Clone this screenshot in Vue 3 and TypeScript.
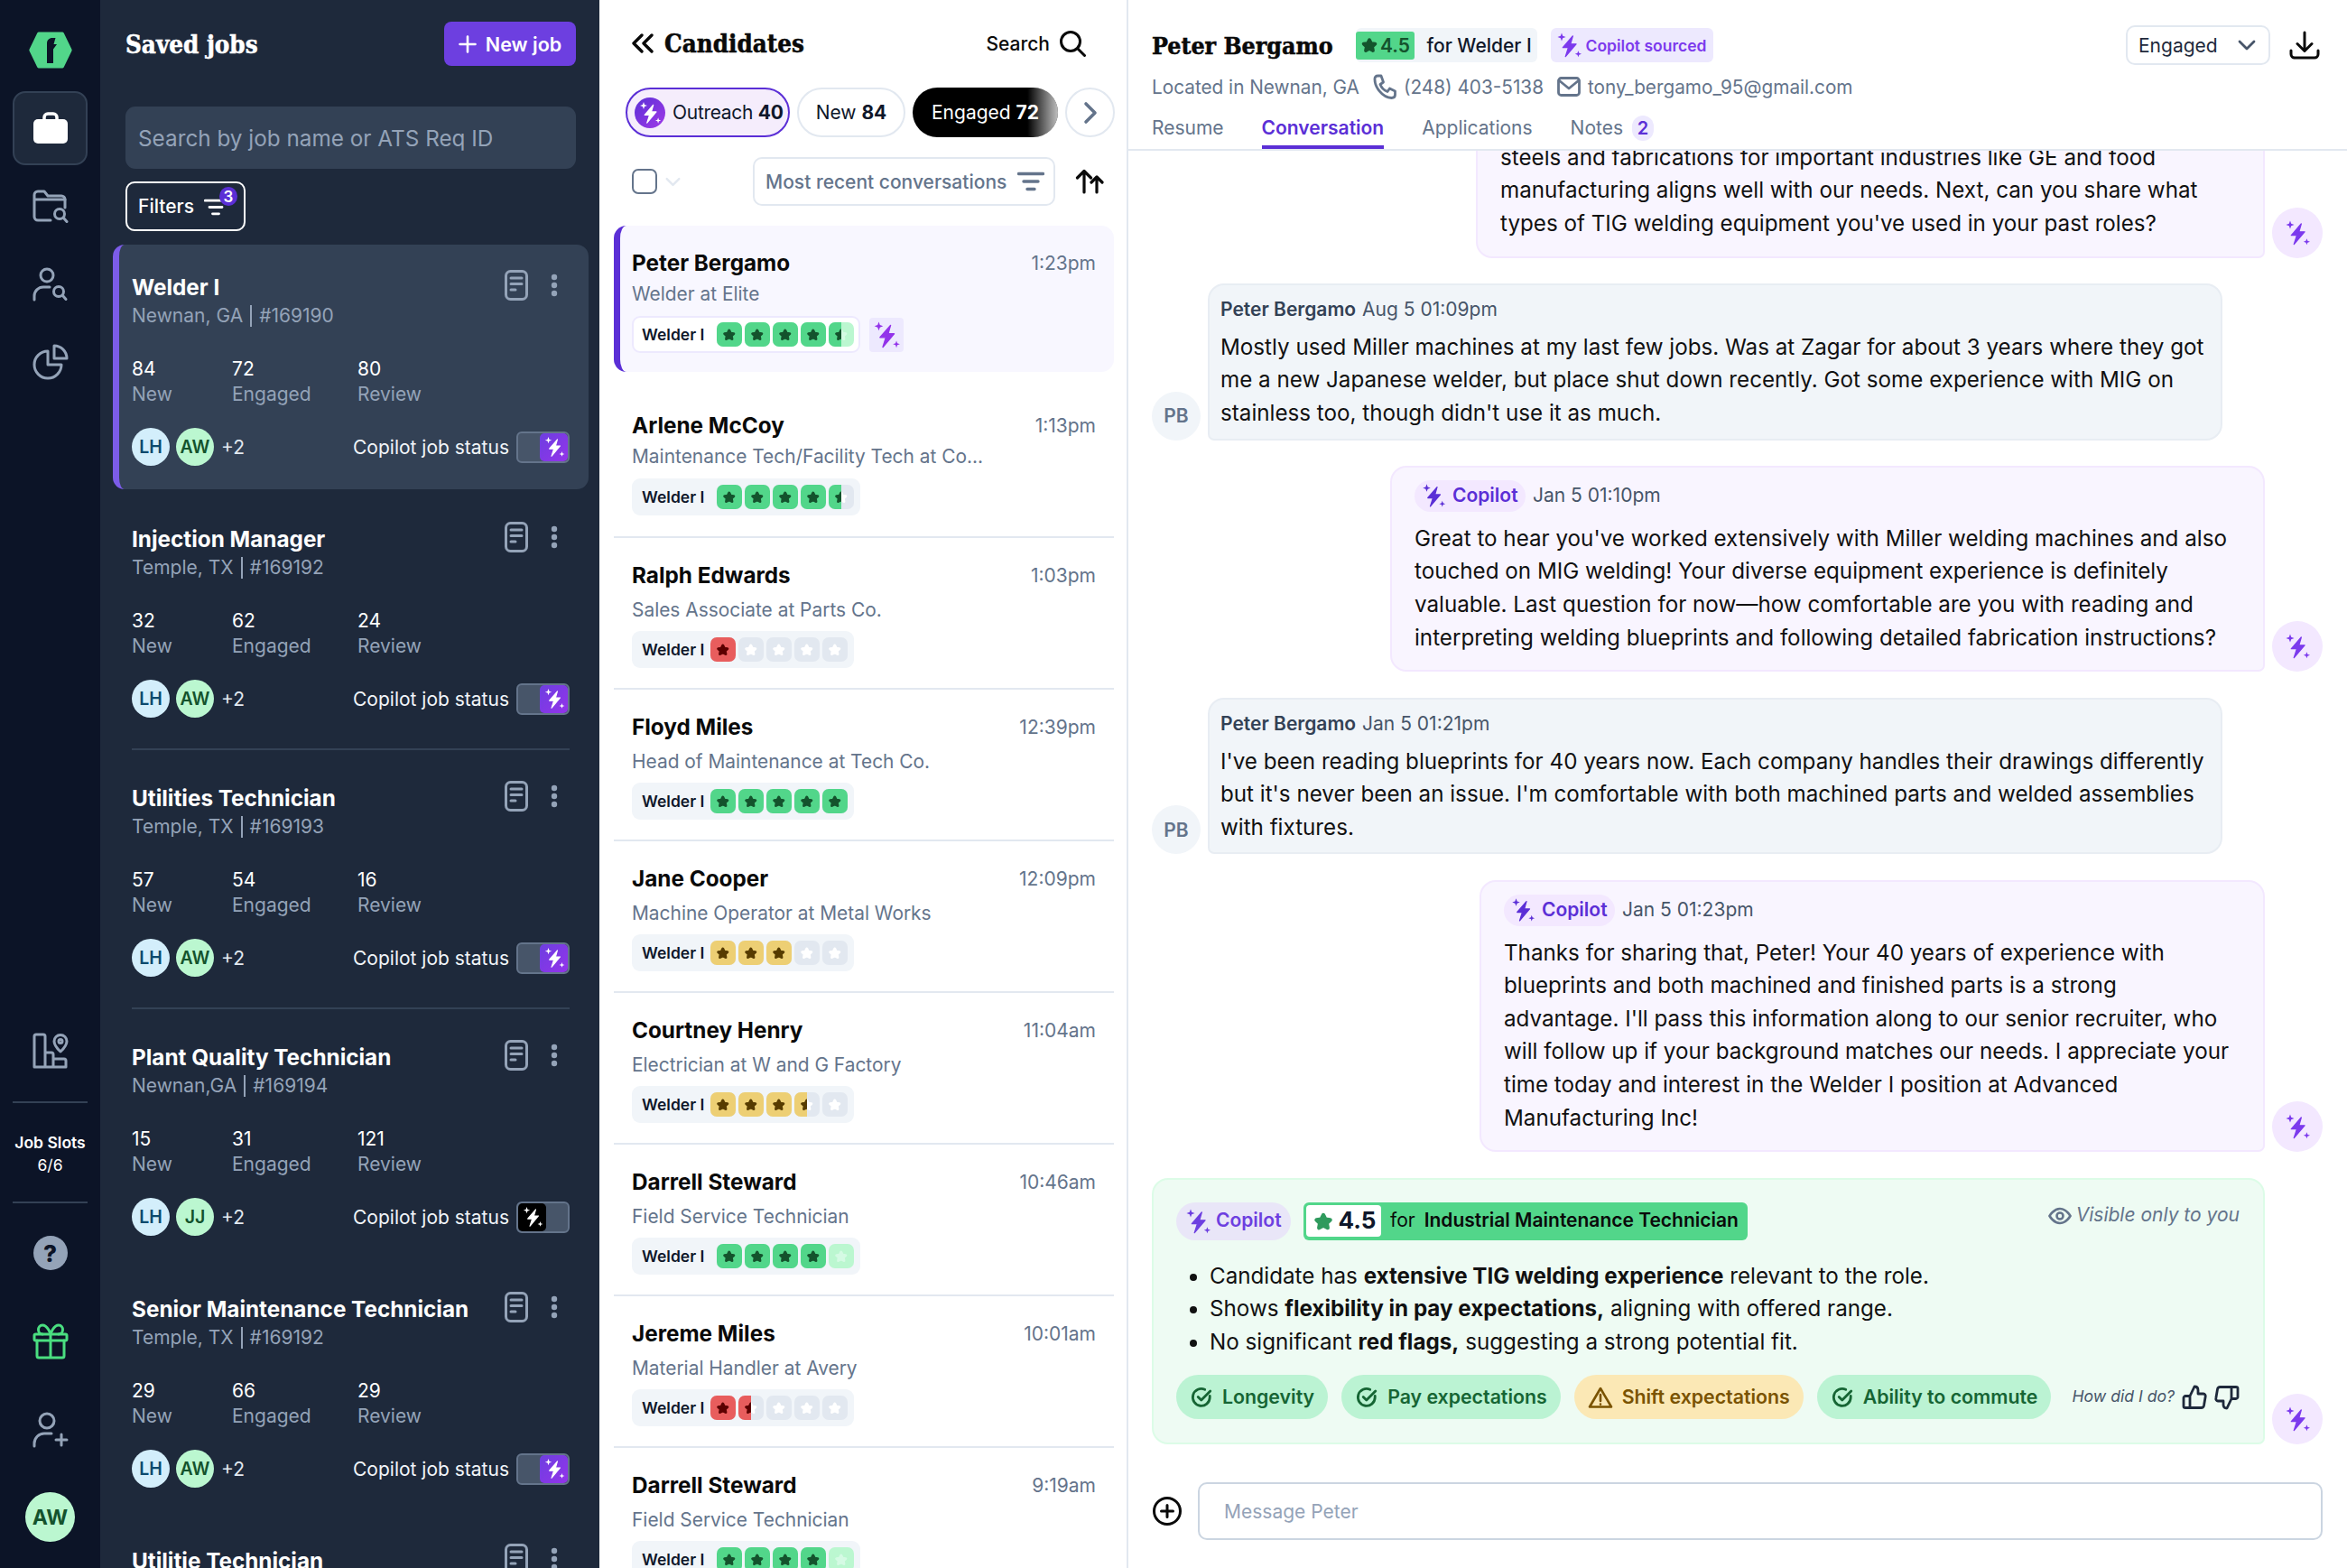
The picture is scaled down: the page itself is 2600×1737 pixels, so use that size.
<script setup lang="ts">
type Job = { title: string; loc: string; id: string; n: number; e: number; r: number; second: string; on: boolean; selected?: boolean; rule?: boolean; tail?: boolean }
const jobs: Job[] = [
  { title: 'Welder I', loc: 'Newnan, GA', id: '#169190', n: 84, e: 72, r: 80, second: 'AW', on: true, selected: true },
  { title: 'Injection Manager', loc: 'Temple, TX', id: '#169192', n: 32, e: 62, r: 24, second: 'AW', on: true, rule: true },
  { title: 'Utilities Technician', loc: 'Temple, TX', id: '#169193', n: 57, e: 54, r: 16, second: 'AW', on: true, rule: true },
  { title: 'Plant Quality Technician', loc: 'Newnan,GA', id: '#169194', n: 15, e: 31, r: 121, second: 'JJ', on: false },
  { title: 'Senior Maintenance Technician', loc: 'Temple, TX', id: '#169192', n: 29, e: 66, r: 29, second: 'AW', on: true },
  { title: 'Utilitie Technician', loc: 'Temple, TX', id: '#169193', n: 57, e: 54, r: 16, second: 'AW', on: true, tail: true },
]
type Cand = { name: string; sub: string; time: string; rating: number; tone: 'green' | 'yellow' | 'red'; pale?: boolean; wide?: boolean; selected?: boolean; tight?: boolean }
const cands: Cand[] = [
  { name: 'Peter Bergamo', sub: 'Welder at Elite', time: '1:23pm', rating: 4.5, tone: 'green', pale: true, wide: true, selected: true, tight: true },
  { name: 'Arlene McCoy', sub: 'Maintenance Tech/Facility Tech at Co...', time: '1:13pm', rating: 4.5, tone: 'green', wide: true, tight: true },
  { name: 'Ralph Edwards', sub: 'Sales Associate at Parts Co.', time: '1:03pm', rating: 1, tone: 'red' },
  { name: 'Floyd Miles', sub: 'Head of Maintenance at Tech Co.', time: '12:39pm', rating: 5, tone: 'green' },
  { name: 'Jane Cooper', sub: 'Machine Operator at Metal Works', time: '12:09pm', rating: 3, tone: 'yellow' },
  { name: 'Courtney Henry', sub: 'Electrician at W and G Factory', time: '11:04am', rating: 3.5, tone: 'yellow' },
  { name: 'Darrell Steward', sub: 'Field Service Technician', time: '10:46am', rating: 4, tone: 'green', pale: true, wide: true },
  { name: 'Jereme Miles', sub: 'Material Handler at Avery', time: '10:01am', rating: 1.5, tone: 'red' },
  { name: 'Darrell Steward', sub: 'Field Service Technician', time: '9:19am', rating: 4, tone: 'green', pale: true, wide: true },
]
function fill(rating: number, i: number): number {
  return Math.max(0, Math.min(1, rating - i)) * 100
}
const pills = [
  { label: 'Longevity', warn: false },
  { label: 'Pay expectations', warn: false },
  { label: 'Shift expectations', warn: true },
  { label: 'Ability to commute', warn: false },
]
</script>

<template>
  <div class="app">
    <svg class="sprite" aria-hidden="true">
      <symbol id="bolt" viewBox="0 0 24 24">
        <path fill="currentColor" stroke="currentColor" stroke-width="1" stroke-linejoin="round" d="M15.200 4.500 7 14h4.600L9.200 21.500l8.800-10.400h-4.700Z" />
        <path fill="currentColor" d="m6 1.800.9 2.500 2.500.9-2.500.9-.9 2.500-.9-2.500-2.500-.9 2.500-.9ZM19.800 16.600l.7 2 2 .7-2 .7-.7 2-.7-2-2-.7 2-.7Z" />
      </symbol>
      <symbol id="star" viewBox="0 0 24 24">
        <polygon fill="currentColor" stroke="currentColor" stroke-width="4" stroke-linejoin="round" points="12,5.500 14.200,9.800 19,10.500 15.500,13.800 16.400,18.600 12,16.300 7.600,18.600 8.500,13.800 5,10.500 9.800,9.800" />
      </symbol>
      <symbol id="doc" viewBox="0 0 26 34">
        <rect x="1.500" y="1.500" width="23" height="31" rx="5" fill="none" stroke="currentColor" stroke-width="3" />
        <path d="M7 9h12M7 15.500h12M7 22h5" fill="none" stroke="currentColor" stroke-width="3" stroke-linecap="round" />
      </symbol>
      <symbol id="dots" viewBox="0 0 8 26">
        <circle cx="4" cy="4" r="3.200" fill="currentColor" /><circle cx="4" cy="13" r="3.200" fill="currentColor" /><circle cx="4" cy="22" r="3.200" fill="currentColor" />
      </symbol>
      <symbol id="check" viewBox="0 0 24 24">
        <path d="M20.500 10.500V12A8.700 8.700 0 1 1 15.400 4" fill="none" stroke="currentColor" stroke-width="2.600" stroke-linecap="round" />
        <path d="m8.500 11.500 3.300 3.300L21 5.500" fill="none" stroke="currentColor" stroke-width="2.600" stroke-linecap="round" stroke-linejoin="round" />
      </symbol>
      <symbol id="filter" viewBox="0 0 30 22">
        <path d="M1.500 2.500h27M7 11h16M11 19.500h8" fill="none" stroke="currentColor" stroke-width="3.400" stroke-linecap="round" />
      </symbol>
      <symbol id="chev" viewBox="0 0 20 12">
        <path d="m2 2 8 8 8-8" fill="none" stroke="currentColor" stroke-width="2.800" stroke-linecap="round" stroke-linejoin="round" />
      </symbol>
    </svg>

    <nav class="rail">
      <svg class="logo" viewBox="0 0 48 43">
        <path fill="#52d68a" d="M11 1.500h26a2 2 0 0 1 1.700 1l8.700 18a2 2 0 0 1 0 2l-8.700 18a2 2 0 0 1-1.700 1H11a2 2 0 0 1-1.700-1l-8.700-18a2 2 0 0 1 0-2l8.700-18a2 2 0 0 1 1.700-1Z" />
        <path fill="#0c1427" d="M20 36V14c0-3.500 2.500-6 6-6h3.500l-2 7H31l-4 5.500V36Z" />
      </svg>
      <div class="rail-item rail-active">
        <svg width="40" height="36" viewBox="0 0 40 36">
          <path fill="none" stroke="#fff" stroke-width="3.500" d="M13 9V6a4 4 0 0 1 4-4h6a4 4 0 0 1 4 4v3" />
          <rect x="1" y="8" width="38" height="27" rx="5" fill="#fff" />
        </svg>
      </div>
      <div class="rail-item rail-first">
        <svg width="40" height="38" viewBox="0 0 40 38" fill="none" stroke="#94a3b8" stroke-width="3" stroke-linecap="round" stroke-linejoin="round">
          <path d="M20 34H6a4 4 0 0 1-4-4V6a4 4 0 0 1 4-4h7l4 5h15a4 4 0 0 1 4 4v9" />
          <path d="M3 11h33" />
          <circle cx="30" cy="27" r="5.500" /><path d="m34.500 31.500 3.500 4" />
        </svg>
      </div>
      <div class="rail-item">
        <svg width="40" height="38" viewBox="0 0 40 38" fill="none" stroke="#94a3b8" stroke-width="3" stroke-linecap="round" stroke-linejoin="round">
          <circle cx="16" cy="9" r="7" /><path d="M2 36v-4a10 10 0 0 1 10-10h7" />
          <circle cx="29" cy="27" r="5.500" /><path d="m33.500 31.500 3.500 4" />
        </svg>
      </div>
      <div class="rail-item">
        <svg width="40" height="40" viewBox="0 0 40 40" fill="none" stroke="#94a3b8" stroke-width="3" stroke-linejoin="round">
          <path d="M17 8A15 15 0 1 0 32 23H17Z" /><path d="M24 2a14 14 0 0 1 14 14H24Z" />
        </svg>
      </div>

      <div class="rail-bottom">
        <svg class="rb-map" width="40" height="40" viewBox="0 0 40 40" fill="none" stroke="#94a3b8" stroke-width="3" stroke-linecap="round" stroke-linejoin="round">
          <path d="M2 38V4a2 2 0 0 1 2-2h8a2 2 0 0 1 2 2v34ZM14 22h7a2 2 0 0 1 2 2v14H14M23 29h12a2 2 0 0 1 2 2v7H23" />
          <path d="M31 21s-7-6.500-7-11.500a7 7 0 0 1 14 0C38 14.500 31 21 31 21Z" /><circle cx="31" cy="9.500" r="2" />
        </svg>
        <div class="rb-rule rb-r1"></div>
        <div class="slots"><b>Job Slots</b><span>6/6</span></div>
        <div class="rb-rule rb-r2"></div>
        <div class="help">?</div>
        <svg class="gift" width="40" height="40" viewBox="0 0 40 40" fill="none" stroke="#4ade80" stroke-width="3" stroke-linecap="round" stroke-linejoin="round">
          <rect x="2" y="12" width="36" height="7" rx="1.500" /><path d="M5 19v17a2 2 0 0 0 2 2h26a2 2 0 0 0 2-2V19M20 12v26M20 12s-3-10-9-10c-6 0-6 10 0 10M20 12s3-10 9-10c6 0 6 10 0 10" />
        </svg>
        <svg class="adduser" width="40" height="40" viewBox="0 0 40 40" fill="none" stroke="#94a3b8" stroke-width="3" stroke-linecap="round" stroke-linejoin="round">
          <circle cx="16" cy="10" r="8" /><path d="M2 38v-3a11 11 0 0 1 11-11h8M32 25v12M26 31h12" />
        </svg>
        <div class="me">AW</div>
      </div>
    </nav>

    <section class="saved">
      <div class="saved-head">
        <h1 class="slab saved-title">Saved jobs</h1>
        <button class="newjob">
          <svg width="20" height="20" viewBox="0 0 20 20"><path d="M10 1.500v17M1.500 10h17" stroke="#fff" stroke-width="2.600" stroke-linecap="round" /></svg>
          New job
        </button>
      </div>
      <div class="search-field">Search by job name or ATS Req ID</div>
      <div class="filters">
        Filters
        <span class="fwrap">
          <svg class="ficon"><use href="#filter" /></svg>
          <span class="fbadge">3</span>
        </span>
      </div>
      <div class="joblist">
        <template v-for="job in jobs" :key="job.title + job.id">
          <article class="job" :class="{ 'job-sel': job.selected, 'job-tail': job.tail }">
            <div class="job-head">
              <div class="job-title">{{ job.title }}</div>
              <svg class="jdoc"><use href="#doc" /></svg>
              <svg class="jdots"><use href="#dots" /></svg>
            </div>
            <div class="job-sub"><span>{{ job.loc }}</span><i></i><span>{{ job.id }}</span></div>
            <div class="stats">
              <div class="st st1"><b>{{ job.n }}</b><span>New</span></div>
              <div class="st st2"><b>{{ job.e }}</b><span>Engaged</span></div>
              <div class="st"><b>{{ job.r }}</b><span>Review</span></div>
            </div>
            <div class="job-foot">
              <span class="av av-lh">LH</span>
              <span class="av av-g">{{ job.second }}</span>
              <span class="more">+2</span>
              <span class="cjs">Copilot job status</span>
              <span class="toggle" :class="{ 'toggle-off': !job.on }">
                <span class="knob"><svg width="26" height="26"><use href="#bolt" /></svg></span>
              </span>
            </div>
          </article>
          <div v-if="job.rule" class="job-rule"></div>
        </template>
      </div>
    </section>

    <section class="cands">
      <div class="c-head">
        <svg width="24" height="22" viewBox="0 0 24 22" fill="none" stroke="#0a0a0a" stroke-width="3.400" stroke-linecap="round" stroke-linejoin="round"><path d="M11 2 2 11l9 9M22 2l-9 9 9 9" /></svg>
        <h2 class="slab c-title">Candidates</h2>
        <span class="c-search">Search</span>
        <svg width="30" height="30" viewBox="0 0 30 30" fill="none" stroke="#0a0a0a" stroke-width="3" stroke-linecap="round"><circle cx="13" cy="13" r="10.500" /><path d="m21 21 7.500 7.500" /></svg>
      </div>
      <div class="chips">
        <div class="chip chip-out">
          <span class="out-ic"><svg width="28" height="28"><use href="#bolt" /></svg></span>
          <span>Outreach <b>40</b></span>
        </div>
        <div class="chip chip-new"><span>New <b>84</b></span></div>
        <div class="chip chip-eng"><span>Engaged <b>72</b></span></div>
        <div class="chip chip-next"><svg width="16" height="26" viewBox="0 0 16 26" fill="none" stroke="#64748b" stroke-width="3.600" stroke-linecap="round" stroke-linejoin="round"><path d="m3 3 10 10L3 23" /></svg></div>
      </div>
      <div class="sortbar">
        <span class="cbx"></span>
        <svg class="cchev"><use href="#chev" /></svg>
        <div class="sort">
          <span>Most recent conversations</span>
          <svg class="sfil"><use href="#filter" /></svg>
        </div>
        <svg width="32" height="28" viewBox="0 0 32 28" fill="none" stroke="#0a0a0a" stroke-width="3.200" stroke-linecap="round" stroke-linejoin="round"><path d="M10 26V3M2.500 10 10 2.500 17.500 10M24 26V9M18 15l6-6 6 6" /></svg>
      </div>
      <div class="clist">
        <article v-for="(c, idx) in cands" :key="idx" class="cand" :class="{ 'cand-sel': c.selected, 'cand-tight': c.tight }">
          <div class="cand-top"><b>{{ c.name }}</b><span>{{ c.time }}</span></div>
          <div class="cand-sub">{{ c.sub }}</div>
          <div class="cand-tags">
            <div class="wtag" :class="{ 'wtag-wide': c.wide }">
              <span class="wname">Welder I</span>
              <span class="tiles">
                <span v-for="i in [0, 1, 2, 3, 4]" :key="i" class="tile" :class="{ 'tile-pale': c.pale }">
                  <svg class="tstar"><use href="#star" /></svg>
                  <span class="tfill" :class="'tone-' + c.tone" :style="{ width: fill(c.rating, i) + '%' }">
                    <svg class="tstar"><use href="#star" /></svg>
                  </span>
                </span>
              </span>
            </div>
            <span v-if="c.selected" class="magic"><svg width="34" height="34"><use href="#bolt" /></svg></span>
          </div>
        </article>
      </div>
    </section>

    <main class="detail">
      <header class="d-head">
        <div class="d-row1">
          <h2 class="slab d-name">Peter Bergamo</h2>
          <div class="rate"><span class="rate-g"><svg width="22" height="22"><use href="#star" /></svg>4.5</span><span class="rate-t">for Welder I</span></div>
          <div class="sourced"><svg width="32" height="32"><use href="#bolt" /></svg>Copilot sourced</div>
          <div class="status">Engaged<svg width="20" height="12"><use href="#chev" /></svg></div>
          <svg class="dl" width="34" height="32" viewBox="0 0 34 32" fill="none" stroke="#0a0a0a" stroke-width="3" stroke-linecap="round" stroke-linejoin="round"><path d="M17 2v20M9 14.500l8 8 8-8M2 22v4a4 4 0 0 0 4 4h22a4 4 0 0 0 4-4v-4" /></svg>
        </div>
        <div class="d-row2">
          <span>Located in Newnan, GA</span>
          <svg width="26" height="28" viewBox="0 0 26 28" fill="none" stroke="#64748b" stroke-width="2.800" stroke-linecap="round" stroke-linejoin="round"><path d="M5 2h4l2.500 7-3.500 2.500c1.500 4 4 6.500 8 8L18.500 16l6 3v4c0 2.500-2 3.500-4 3.500C10 26 1.500 14 2 5c0-2 1.500-3 3-3Z" /></svg>
          <span>(248) 403-5138</span>
          <svg width="26" height="26" viewBox="0 0 26 26" fill="none" stroke="#64748b" stroke-width="2.800" stroke-linecap="round" stroke-linejoin="round"><rect x="1.500" y="3.500" width="23" height="19" rx="3" /><path d="m2 6 11 9 11-9" /></svg>
          <span>tony_bergamo_95@gmail.com</span>
        </div>
        <div class="tabs">
          <span>Resume</span>
          <span class="tab-on">Conversation</span>
          <span>Applications</span>
          <span>Notes</span>
          <span class="notes-n">2</span>
        </div>
      </header>

      <div class="chat">
        <div class="msg msg-c">
          <div class="bub bub-c b1">
            <p>steels and fabrications for important industries like GE and food manufacturing aligns well with our needs. Next, can you share what types of TIG welding equipment you've used in your past roles?</p>
          </div>
          <span class="side"><svg width="32" height="32"><use href="#bolt" /></svg></span>
        </div>

        <div class="msg msg-p">
          <span class="pb">PB</span>
          <div class="bub bub-p">
            <div class="who"><b>Peter Bergamo</b><span>Aug 5 01:09pm</span></div>
            <p>Mostly used Miller machines at my last few jobs. Was at Zagar for about 3 years where they got me a new Japanese welder, but place shut down recently. Got some experience with MIG on stainless too, though didn't use it as much.</p>
          </div>
        </div>

        <div class="msg msg-c">
          <div class="bub bub-c b3">
            <div class="who"><span class="cpill"><svg width="30" height="30"><use href="#bolt" /></svg>Copilot</span><span>Jan 5 01:10pm</span></div>
            <p>Great to hear you've worked extensively with Miller welding machines and also touched on MIG welding! Your diverse equipment experience is definitely valuable. Last question for now—how comfortable are you with reading and interpreting welding blueprints and following detailed fabrication instructions?</p>
          </div>
          <span class="side"><svg width="32" height="32"><use href="#bolt" /></svg></span>
        </div>

        <div class="msg msg-p">
          <span class="pb">PB</span>
          <div class="bub bub-p">
            <div class="who"><b>Peter Bergamo</b><span>Jan 5 01:21pm</span></div>
            <p>I've been reading blueprints for 40 years now. Each company handles their drawings differently but it's never been an issue. I'm comfortable with both machined parts and welded assemblies with fixtures.</p>
          </div>
        </div>

        <div class="msg msg-c">
          <div class="bub bub-c b5">
            <div class="who"><span class="cpill"><svg width="30" height="30"><use href="#bolt" /></svg>Copilot</span><span>Jan 5 01:23pm</span></div>
            <p>Thanks for sharing that, Peter! Your 40 years of experience with blueprints and both machined and finished parts is a strong advantage. I'll pass this information along to our senior recruiter, who will follow up if your background matches our needs. I appreciate your time today and interest in the Welder I position at Advanced Manufacturing Inc!</p>
          </div>
          <span class="side"><svg width="32" height="32"><use href="#bolt" /></svg></span>
        </div>

        <div class="msg msg-c">
          <div class="bub bub-g">
            <div class="g-head">
              <span class="gpill"><svg width="32" height="32"><use href="#bolt" /></svg>Copilot</span>
              <span class="gscore"><span class="gs-w"><svg width="26" height="26"><use href="#star" /></svg>4.5</span><span class="gs-for">for</span><b>Industrial Maintenance Technician</b></span>
              <span class="visible">
                <svg width="26" height="20" viewBox="0 0 26 20" fill="none" stroke="#64748b" stroke-width="2.600"><path d="M1.500 10S6 2 13 2s11.500 8 11.500 8S20 18 13 18 1.500 10 1.500 10Z" /><circle cx="13" cy="10" r="3.500" /></svg>
                Visible only to you
              </span>
            </div>
            <ul class="g-list">
              <li>Candidate has <b>extensive TIG welding experience</b> relevant to the role.</li>
              <li>Shows <b>flexibility in pay expectations,</b> aligning with offered range.</li>
              <li>No significant <b>red flags,</b> suggesting a strong potential fit.</li>
            </ul>
            <div class="g-pills">
              <span v-for="p in pills" :key="p.label" class="pill" :class="{ 'pill-warn': p.warn }">
                <svg v-if="!p.warn" width="26" height="26"><use href="#check" /></svg>
                <svg v-else width="28" height="26" viewBox="0 0 28 26" fill="none" stroke="#7a5300" stroke-width="2.600" stroke-linecap="round" stroke-linejoin="round"><path d="M14 3 2 23.500h24ZM14 10v7M14 20.500v.1" /></svg>
                {{ p.label }}
              </span>
              <span class="fb">
                <em>How did I do?</em>
                <svg width="28" height="28" viewBox="0 0 28 28" fill="none" stroke="#1e293b" stroke-width="2.800" stroke-linecap="round" stroke-linejoin="round"><path d="M9 12.500 14 2c2.500 0 4 1.500 4 4v4h6c1.500 0 2.500 1.500 2.200 3l-1.700 10c-.3 1.500-1.500 2.500-3 2.500H9ZM9 12.500H4c-1 0-2 1-2 2V24c0 1 1 1.500 2 1.500h5" /></svg>
                <svg width="28" height="28" viewBox="0 0 28 28" fill="none" stroke="#1e293b" stroke-width="2.800" stroke-linecap="round" stroke-linejoin="round"><path d="M19 15.500 14 26c-2.500 0-4-1.500-4-4v-4H4c-1.500 0-2.500-1.500-2.200-3L3.500 5c.3-1.500 1.500-2.500 3-2.500H19ZM19 15.500h5c1 0 2-1 2-2V4c0-1-1-1.500-2-1.500h-5" /></svg>
              </span>
            </div>
          </div>
          <span class="side"><svg width="32" height="32"><use href="#bolt" /></svg></span>
        </div>
      </div>

      <div class="composer">
        <svg width="34" height="34" viewBox="0 0 34 34" fill="none" stroke="#0a0a0a" stroke-width="3" stroke-linecap="round"><circle cx="17" cy="17" r="14.500" /><path d="M17 10.500v13M10.500 17h13" /></svg>
        <div class="input">Message Peter</div>
      </div>
    </main>
  </div>
</template>

<style>
html, body { margin: 0; padding: 0; background: #fff; }
</style>

<style scoped>
* { box-sizing: border-box; }
.app {
  width: 2600px; height: 1737px; overflow: hidden; display: flex;
  font-family: Inter, "Noto Sans", sans-serif; color: #0f172a; background: #fff;
  font-size: 21px;
}
.sprite { display: none; }
.slab { font-family: "DejaVu Serif Condensed", "DejaVu Serif", serif; font-weight: 700; margin: 0; -webkit-text-stroke: 0.5px currentColor; }

/* rail */
.rail { width: 111px; flex: none; background: #0c1427; display: flex; flex-direction: column; align-items: center; padding-top: 34px; height: 100%; }
.logo { width: 48px; height: 43px; display: block; flex: none; }
.rail-item { width: 83px; height: 86px; display: flex; align-items: center; justify-content: center; flex: none; }
.rail-active { height: 82px; margin-top: 24px; background: #1e293b; border: 2px solid #334155; border-radius: 14px; }
.rail-first { margin-top: 3px; }
.rail-bottom { margin-top: auto; display: flex; flex-direction: column; align-items: center; padding-bottom: 29px; }
.rb-rule { width: 83px; height: 2px; background: #334155; }
.rb-r1 { margin-top: 36px; }
.rb-r2 { margin-top: 28px; }
.slots { margin-top: 31px; display: flex; flex-direction: column; align-items: center; color: #fff; font-size: 17.500px; line-height: 25px; }
.slots b { font-weight: 600; }
.help { margin-top: 36px; width: 38px; height: 38px; border-radius: 50%; background: #94a3b8; color: #0c1427; font-weight: 800; font-size: 26px; display: flex; align-items: center; justify-content: center; }
.gift { margin-top: 59px; }
.adduser { margin-top: 58px; }
.me { margin-top: 49px; width: 55px; height: 55px; border-radius: 50%; background: #bbf7d0; color: #14532d; font-weight: 700; font-size: 23px; display: flex; align-items: center; justify-content: center; }

/* saved */
.saved { width: 553px; flex: none; background: #1e293b; padding: 24px 12px 0 14px; display: flex; flex-direction: column; height: 100%; color: #fff; overflow: hidden; }
.saved-head { display: flex; align-items: center; justify-content: space-between; margin: 0 14px; height: 49px; flex: none; }
.saved-title { font-size: 27.500px; color: #fff; }
.newjob { width: 146px; height: 49px; border: 0; border-radius: 8px; background: #6d3fe0; color: #fff; font: 600 21.500px Inter, sans-serif; display: flex; align-items: center; justify-content: center; gap: 10px; padding: 0; }
.search-field { margin: 45px 14px 0; height: 69px; border-radius: 11px; background: #334155; color: #94a3b8; font-size: 24.300px; display: flex; align-items: center; padding-left: 14px; flex: none; }
.filters { margin: 14px 0 0 14px; width: 133px; height: 55px; border: 2.500px solid #fff; border-radius: 10px; display: flex; align-items: center; padding-left: 12px; gap: 11px; font-size: 21px; font-weight: 500; flex: none; }
.fwrap { position: relative; display: block; width: 26px; height: 21px; margin-top: 2px; }
.ficon { width: 26px; height: 21px; display: block; color: #fff; }
.fbadge { position: absolute; right: -11px; top: -12px; width: 20px; height: 21px; border-radius: 50%; background: #5b2fd6; color: #fff; font-size: 17px; font-weight: 600; display: flex; align-items: center; justify-content: center; }
.joblist { margin-top: 15px; display: flex; flex-direction: column; flex: none; }
.job { height: 271px; flex: none; margin-bottom: 8px; padding: 30px 21px 0 14px; border-left: 7px solid transparent; border-radius: 13px; }
.job-sel { background: #334155; border-left-color: #7c5ce8; }
.job-rule { height: 2px; background: #334155; margin: 0 21px 6px 21px; flex: none; }
.job-head { display: flex; align-items: flex-start; height: 34px; }
.job-title { flex: 1; font-size: 24.300px; font-weight: 700; line-height: 34px; white-space: nowrap; }
.jdoc { width: 26px; height: 34px; color: #94a3b8; margin-right: 25px; flex: none; margin-top: -2px; }
.jdots { width: 8px; height: 26px; color: #94a3b8; margin-right: 13px; flex: none; margin-top: 2px; }
.job-sub { margin-top: 0; height: 30px; line-height: 30px; color: #94a3b8; font-size: 21px; display: flex; align-items: center; gap: 8px; }
.job-sub i { display: block; width: 2px; height: 24px; background: #94a3b8; }
.stats { margin-top: 30px; display: flex; }
.st { display: flex; flex-direction: column; line-height: 28px; font-size: 21px; }
.st b { font-weight: 400; color: #fff; }
.st span { color: #94a3b8; }
.st1 { width: 111px; }
.st2 { width: 139px; }
.job-foot { margin-top: 23px; display: flex; align-items: center; height: 42px; }
.av { width: 42px; height: 42px; border-radius: 50%; display: flex; align-items: center; justify-content: center; font-size: 19.500px; font-weight: 600; flex: none; }
.av-lh { background: #d3eefb; color: #0c4a6e; margin-right: 7px; }
.av-g { background: #bbf7d0; color: #14532d; }
.more { margin-left: 8px; font-size: 21px; color: #e2e8f0; }
.cjs { margin-left: auto; font-size: 21px; color: #f1f5f9; }
.toggle { margin-left: 8px; width: 59px; height: 35px; border: 2px solid #64748b; border-radius: 6px; background: #475569; display: flex; justify-content: flex-end; flex: none; }
.knob { width: 31px; height: 31px; border-radius: 5px; background: linear-gradient(135deg, #6d3fe0, #9333ea); color: #fff; display: flex; align-items: center; justify-content: center; }
.toggle-off { justify-content: flex-start; }
.toggle-off .knob { background: #000; }

/* candidates */
.cands { width: 586px; flex: none; border-right: 2px solid #e2e8f0; background: #fff; height: 100%; overflow: hidden; display: flex; flex-direction: column; }
.c-head { display: flex; align-items: center; height: 40px; margin-top: 28px; padding: 0 45px 0 36px; flex: none; }
.c-title { font-size: 27.500px; color: #0a0a0a; margin-left: 12px; flex: 1; }
.c-search { font-size: 21px; font-weight: 500; color: #0a0a0a; margin-right: 10px; }
.chips { display: flex; gap: 8px; margin: 29px 0 0 29px; flex: none; }
.chip { height: 55px; border-radius: 28px; display: flex; align-items: center; justify-content: center; font-size: 21px; color: #0f172a; flex: none; position: relative; overflow: hidden; white-space: nowrap; }
.chip b { font-weight: 700; }
.chip-out { width: 182px; border: 2.500px solid #5b2fd6; background: #f5edfc; justify-content: flex-start; padding-left: 8px; gap: 8px; letter-spacing: -0.3px; }
.out-ic { width: 34px; height: 34px; border-radius: 50%; background: linear-gradient(135deg, #5b2fd6, #a03ae8); color: #fff; display: flex; align-items: center; justify-content: center; flex: none; }
.chip-new { width: 120px; border: 2px solid #e2e8f0; }
.chip-eng { width: 161px; background: #000; color: #fff; justify-content: flex-start; padding-left: 21px; }
.chip-eng::after { content: ""; position: absolute; right: 0; top: 0; bottom: 0; width: 34px; background: linear-gradient(90deg, rgba(255,255,255,0), rgba(255,255,255,.75)); }
.chip-next { width: 55px; border: 2px solid #e2e8f0; }
.sortbar { display: flex; align-items: center; margin: 22px 0 0 36px; height: 54px; flex: none; }
.cbx { width: 28px; height: 28px; border: 2.500px solid #64748b; border-radius: 7px; flex: none; }
.cchev { width: 17px; height: 11px; color: #e2e8f0; margin-left: 9px; flex: none; }
.sort { margin-left: 80px; width: 335px; height: 54px; border: 2px solid #e2e8f0; border-radius: 10px; display: flex; align-items: center; justify-content: space-between; padding: 0 10px 0 12px; color: #64748b; font-size: 21px; font-weight: 500; flex: none; white-space: nowrap; }
.sfil { width: 30px; height: 22px; color: #64748b; flex: none; }
.sortbar > svg:last-child { margin-left: 22px; flex: none; }
.clist { margin: 22px 14px 0 16px; display: flex; flex-direction: column; flex: none; }
.cand { height: 168px; flex: none; border-top: 2px solid #e2e8f0; padding: 23px 20px 0 20px; }
.cand-top { display: flex; justify-content: space-between; align-items: center; height: 36px; }
.cand-top b { font-size: 24.300px; font-weight: 700; color: #0a0a0a; }
.cand-top span { font-size: 21px; color: #64748b; }
.cand-sub { margin-top: 3px; height: 36px; line-height: 36px; font-size: 20.900px; color: #64748b; white-space: nowrap; }
.cand-tags { margin-top: 5px; display: flex; align-items: center; gap: 10px; }
.cand-sel { height: 162px; border-top: 0; border-left: 7px solid #5b2fd6; border-radius: 14px; background: #f8f7ff; padding: 23px 20px 0 13px; }
.cand-tight { height: 164px; }
.cand-tight.cand-sel { height: 162px; margin-bottom: 18px; }
.cand-tight:not(.cand-sel) { border-top: 0; }
.cand-tight .cand-sub { margin-top: 0; height: 34px; line-height: 34px; }
.cand-tight .cand-tags { margin-top: 7px; }
.wtag { height: 41px; width: 246px; border-radius: 9px; background: #f1f5f9; display: flex; align-items: center; padding-left: 11px; flex: none; }
.wtag-wide { width: 253px; }
.cand-sel .wtag { background: #fff; border: 2px solid #ede9fe; padding-left: 9px; }
.wname { width: 76px; font-size: 17.500px; font-weight: 600; color: #0f172a; white-space: nowrap; flex: none; }
.wtag-wide .wname { width: 83px; }
.tiles { display: flex; gap: 3.500px; }
.tile { position: relative; width: 27.500px; height: 27.500px; border-radius: 7px; background: #e2e8f0; overflow: hidden; color: #fff; flex: none; }
.tile-pale { background: #bbf7d0; color: #d5fae4; }
.tstar { position: absolute; left: 5px; top: 5px; width: 17.500px; height: 17.500px; display: block; }
.tfill { position: absolute; left: 0; top: 0; bottom: 0; overflow: hidden; }
.tone-green { background: #52d68a; color: #14532d; }
.tone-yellow { background: #edcf74; color: #573c00; }
.tone-red { background: #e85d5d; color: #5c0000; }
.magic { width: 38px; height: 38px; border-radius: 4px; background: #ede9fe; color: #9333ea; display: flex; align-items: center; justify-content: center; }

/* detail */
.detail { flex: 1; min-width: 0; display: flex; flex-direction: column; height: 100%; }
.d-head { padding: 28px 30px 0 26px; border-bottom: 2px solid #e2e8f0; height: 167px; flex: none; }
.d-row1 { display: flex; align-items: center; height: 44px; }
.d-name { font-size: 26.500px; color: #0a0a0a; }
.rate { margin-left: 25px; height: 38px; width: 201px; border-radius: 6px; background: #f1f5f9; display: flex; align-items: center; }
.rate-g { width: 65px; height: 31px; border-radius: 3px; background: #52d68a; color: #14532d; display: flex; align-items: center; justify-content: center; font-size: 21px; font-weight: 600; gap: 1px; }
.rate-t { margin-left: 14px; font-size: 21px; font-weight: 500; white-space: nowrap; }
.sourced { margin-left: 15px; height: 38px; width: 180px; border-radius: 6px; background: #ede9fe; color: #7c3aed; display: flex; align-items: center; font-size: 17.500px; font-weight: 600; white-space: nowrap; padding-left: 4px; gap: 3px; }
.status { margin-left: auto; width: 160px; height: 44px; border: 2px solid #e2e8f0; border-radius: 10px; display: flex; align-items: center; justify-content: space-between; padding: 0 14px 0 12px; font-size: 21px; color: #1e293b; }
.status svg { color: #475569; }
.dl { margin-left: 21px; }
.d-row2 { margin-top: 9px; height: 30px; display: flex; align-items: center; color: #64748b; font-size: 20.750px; white-space: nowrap; }
.d-row2 svg { margin: 0 8px 0 15px; flex: none; }
.tabs { margin-top: 7px; display: flex; align-items: flex-start; height: 47px; font-size: 21px; color: #64748b; }
.tabs > span { margin-right: 42px; line-height: 48px; height: 47px; }
.tabs > span:nth-child(4) { margin-right: 10px; }
.tabs .tab-on { color: #5b2fd6; font-weight: 600; border-bottom: 4px solid #5b2fd6; }
.tabs .notes-n { margin: 10px 0 0 0; height: 28px; width: 24px; line-height: 28px; border-radius: 12px; background: #ede9fe; color: #5b2fd6; font-weight: 600; text-align: center; font-size: 20px; }

.chat { flex: 1; min-height: 0; overflow: hidden; display: flex; flex-direction: column; justify-content: flex-end; padding: 0 27px 42px 26px; gap: 28.300px; }
.msg { display: flex; align-items: flex-end; flex: none; gap: 8px; }
.msg-c { justify-content: flex-end; }
.bub { font-size: 24.200px; line-height: 36.600px; color: #111; }
.bub p { margin: 0; }
.bub-c { background: #f9f5ff; border: 2px solid #f3e8ff; border-radius: 18px 18px 7px 18px; padding: 14px 28px 17px 25px; }
.b1 { width: 874px; }
.b3 { width: 969px; }
.b5 { width: 870px; padding-right: 35px; }
.bub-p { width: 1124px; background: #f1f5f9; border: 2px solid #e8edf3; border-radius: 18px 18px 18px 7px; padding: 13px 6px 9px 12px; }
.pb { width: 54px; height: 54px; border-radius: 50%; background: #f1f5f9; color: #64748b; font-weight: 600; font-size: 21px; display: flex; align-items: center; justify-content: center; flex: none; }
.side { width: 56px; height: 56px; border-radius: 50%; background: #f3e8ff; color: #7c3aed; display: flex; align-items: center; justify-content: center; flex: none; }
.who { font-size: 21px; line-height: 28px; color: #475569; display: flex; align-items: center; gap: 7px; margin-bottom: 10px; white-space: pre; }
.who b { font-weight: 600; color: #334155; }
.bub-c .who { height: 35px; margin-bottom: 12px; gap: 8px; }
.cpill { height: 35px; width: 123px; border-radius: 18px; background: #f3e8ff; color: #5b2fd6; font-weight: 600; font-size: 21px; display: flex; align-items: center; padding-left: 6px; gap: 6px; }

.bub-g { width: 1233px; background: #eefbf3; border: 2px solid #dcfce7; border-radius: 18px 18px 7px 18px; padding: 25px 26px 26px 25px; }
.g-head { display: flex; align-items: flex-start; }
.gpill { height: 42px; width: 127px; border-radius: 21px; background: #e9e6f8; color: #6d3fe0; font-weight: 600; font-size: 21px; display: flex; align-items: center; padding-left: 8px; gap: 4px; flex: none; }
.gscore { margin-left: 14px; height: 42px; width: 492px; border-radius: 6px; background: #52d68a; display: flex; align-items: center; padding-left: 3px; font-size: 21px; color: #0a0a0a; white-space: nowrap; flex: none; }
.gscore b { font-weight: 600; }
.gs-w { width: 83px; height: 35px; border-radius: 4px; background: #fff; color: #0f172a; display: flex; align-items: center; justify-content: center; font-weight: 700; font-size: 26px; gap: 4px; flex: none; }
.gs-w svg { color: #2f9a5d; }
.gs-for { margin: 0 10px 0 10px; }
.visible { margin-left: auto; margin-top: 0; font-size: 21px; font-style: italic; color: #64748b; display: flex; align-items: center; gap: 5px; height: 30px; white-space: nowrap; }
.g-list { margin: 22px 0 0; padding: 0 0 0 37px; font-size: 24.200px; line-height: 36.500px; color: #111; }
.g-list b { font-weight: 700; }
.g-pills { margin-top: 18px; display: flex; align-items: center; gap: 15px; }
.pill { height: 49px; border-radius: 25px; background: #bbf3d3; color: #166534; font-size: 21.300px; font-weight: 600; display: flex; align-items: center; padding: 0 15px; gap: 10px; white-space: nowrap; flex: none; }
.pill-warn { background: #fbe8b5; color: #7a5300; }
.fb { margin-left: auto; display: flex; align-items: center; gap: 0; }
.fb em { font-size: 17.600px; color: #475569; margin-right: 8px; white-space: nowrap; }
.fb svg:last-child { margin-left: 8px; }
.composer { flex: none; display: flex; align-items: center; gap: 17px; padding: 0 27px 31px 26px; }
.input { flex: 1; height: 64px; border: 2px solid #cbd5e1; border-radius: 10px; color: #94a3b8; font-size: 21px; display: flex; align-items: center; padding-left: 27px; }
</style>
